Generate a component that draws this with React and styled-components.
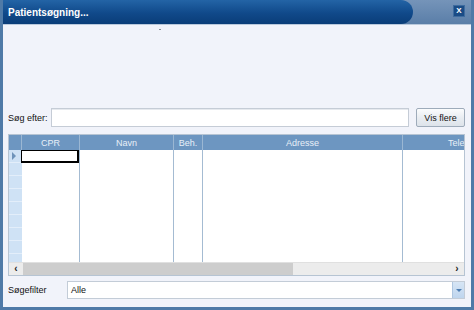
import React from "react";
import styled, { createGlobalStyle } from "styled-components";

const Global = createGlobalStyle`
  html, body { margin: 0; padding: 0; background: #f1f3fa; }
  body { font-family: "Liberation Sans", Arial, sans-serif; }
  * { box-sizing: border-box; }
`;

const Window = styled.div`
  width: 474px;
  height: 310px;
  display: flex;
  flex-direction: column;
  background: #f1f3fa;
  border: 3px solid #4f7aa7;
  border-top: none;
  overflow: hidden;
  position: relative;
`;

const TitleBar = styled.div`
  height: 25px;
  margin: 0 -3px;
  display: flex;
  align-items: stretch;
  background: linear-gradient(#7594b9, #5a7ea8);
  border-bottom: 1px solid #b9c9dc;
`;

const TitleTab = styled.div`
  width: 413px;
  display: flex;
  align-items: center;
  padding-left: 8px;
  background: linear-gradient(#2364a6, #10498a 55%, #0a3d78);
  border-radius: 0 13px 13px 0;
  color: #ffffff;
  font-size: 10px;
  font-weight: bold;
`;

const TitleSpacer = styled.div`
  flex: 1;
  display: flex;
  justify-content: flex-end;
  align-items: flex-start;
  padding: 5px 9px 0 0;
`;

const CloseButton = styled.div`
  width: 12px;
  height: 12px;
  background: #1a4c86;
  border: 1px solid #3e6b9e;
  color: #ffffff;
  font-size: 8px;
  font-weight: bold;
  display: flex;
  align-items: center;
  justify-content: center;
  line-height: 1;
`;

const Body = styled.div`
  flex: 1;
  display: flex;
  flex-direction: column;
  padding: 0 6px 8px 5px;
  position: relative;
`;

const Speck = styled.span`
  position: absolute;
  left: 156px;
  top: 4px;
  width: 2px;
  height: 1px;
  background: #8a8f98;
`;

const Row = styled.div`
  display: flex;
  align-items: center;
  height: ${(p) => p.$h}px;
  margin-top: ${(p) => p.$mt}px;
`;

const Label = styled.div`
  width: ${(p) => p.$w}px;
  flex: none;
  font-size: 9px;
  color: #111;
  white-space: nowrap;
`;

const TextInput = styled.div`
  flex: 1;
  height: 19px;
  margin-right: 7px;
  background: #ffffff;
  border: 1px solid #c5ccd6;
  box-shadow: inset 0 1px 0 #e6e9ee;
`;

const Button = styled.div`
  width: 49px;
  height: 19px;
  flex: none;
  display: flex;
  align-items: center;
  justify-content: center;
  font-size: 9px;
  color: #111;
  background: linear-gradient(#fbfcfd, #e9edf2 50%, #dde3ea);
  border: 1px solid #9eabba;
  border-radius: 2px;
`;

const Grid = styled.div`
  margin-top: 7px;
  height: 142px;
  display: flex;
  flex-direction: column;
  border: 1px solid #b6c4d3;
  background: #ffffff;
  overflow: hidden;
`;

const GridMain = styled.div`
  flex: 1;
  display: flex;
  overflow: hidden;
`;

const RowHeaderCol = styled.div`
  width: 13px;
  flex: none;
  display: flex;
  flex-direction: column;
`;

const Corner = styled.div`
  height: 15px;
  flex: none;
  background: #6d96c1;
  border-right: 1px solid #9bb7d3;
`;

const RowHead = styled.div`
  height: 13px;
  flex: none;
  background: #cfe2f5;
  border-bottom: 1px solid #e3eefa;
  display: flex;
  align-items: center;
  padding-left: 3px;
`;

const Arrow = styled.span`
  width: 0;
  height: 0;
  border-top: 4px solid transparent;
  border-bottom: 4px solid transparent;
  border-left: 4px solid #6f93ba;
`;

const Column = styled.div`
  width: ${(p) => p.$w}px;
  flex: none;
  display: flex;
  flex-direction: column;
  border-right: 1px solid #a4bbd2;
`;

const HeadCell = styled.div`
  height: 15px;
  flex: none;
  background: #6d96c1;
  color: #e8f0f8;
  font-size: 9px;
  display: flex;
  align-items: center;
  justify-content: center;
  white-space: nowrap;
  border-right: 1px solid #9bb7d3;
  margin-right: -1px;
`;

const Cell = styled.div`
  height: 13px;
  flex: none;
  border: ${(p) => (p.$current ? "1px solid #000" : "none")};
  border-right-width: ${(p) => (p.$current ? "2px" : "0")};
  border-bottom-width: ${(p) => (p.$current ? "2px" : "0")};
  margin-left: ${(p) => (p.$current ? "-1px" : "0")};
`;

const ScrollBar = styled.div`
  height: 13px;
  flex: none;
  display: flex;
  background: #ececec;
  border-top: 1px solid #e0e0e0;
`;

const ScrollArrow = styled.div`
  width: 14px;
  flex: none;
  display: flex;
  align-items: center;
  justify-content: center;
  background: #ececec;
  font-size: 10px;
  font-weight: bold;
  color: #222;
  line-height: 1;
`;

const Thumb = styled.div`
  width: 270px;
  flex: none;
  background: #cdcdcd;
`;

const Track = styled.div`
  flex: 1;
`;

const Select = styled.div`
  flex: 1;
  height: 18px;
  display: flex;
  align-items: stretch;
  background: #ffffff;
  border: 1px solid #c3ccd7;
`;

const SelectText = styled.div`
  flex: 1;
  font-size: 9px;
  color: #111;
  display: flex;
  align-items: center;
  padding-left: 3px;
`;

const DropButton = styled.div`
  width: 12px;
  flex: none;
  background: linear-gradient(#d6e5f5, #bed5ee);
  border-left: 1px solid #aec6e0;
  display: flex;
  align-items: center;
  justify-content: center;
`;

const DropArrow = styled.span`
  width: 0;
  height: 0;
  border-left: 3px solid transparent;
  border-right: 3px solid transparent;
  border-top: 3px solid #4f7fb3;
`;

const columns = [
  { name: "CPR", w: 58 },
  { name: "Navn", w: 94 },
  { name: "Beh.", w: 29 },
  { name: "Adresse", w: 200 },
  { name: "Telefon", w: 120 },
];

const ROWS = 9;

export default function App() {
  return (
    <>
      <Global />
      <Window>
        <TitleBar>
          <TitleTab>Patientsøgning...</TitleTab>
          <TitleSpacer>
            <CloseButton>X</CloseButton>
          </TitleSpacer>
        </TitleBar>
        <Body>
          <Speck />
          <Row $h={19} $mt={83}>
            <Label $w={43}>Søg efter:</Label>
            <TextInput />
            <Button>Vis flere</Button>
          </Row>
          <Grid>
            <GridMain>
              <RowHeaderCol>
                <Corner />
                {Array.from({ length: ROWS }).map((_, i) => (
                  <RowHead key={i}>{i === 0 && <Arrow />}</RowHead>
                ))}
              </RowHeaderCol>
              {columns.map((c, ci) => (
                <Column key={c.name} $w={c.w}>
                  <HeadCell>{c.name}</HeadCell>
                  {Array.from({ length: ROWS }).map((_, i) => (
                    <Cell key={i} $current={ci === 0 && i === 0} />
                  ))}
                </Column>
              ))}
            </GridMain>
            <ScrollBar>
              <ScrollArrow>‹</ScrollArrow>
              <Thumb />
              <Track />
              <ScrollArrow>›</ScrollArrow>
            </ScrollBar>
          </Grid>
          <Row $h={18} $mt={5}>
            <Label $w={59}>Søgefilter</Label>
            <Select>
              <SelectText>Alle</SelectText>
              <DropButton>
                <DropArrow />
              </DropButton>
            </Select>
          </Row>
        </Body>
      </Window>
    </>
  );
}
